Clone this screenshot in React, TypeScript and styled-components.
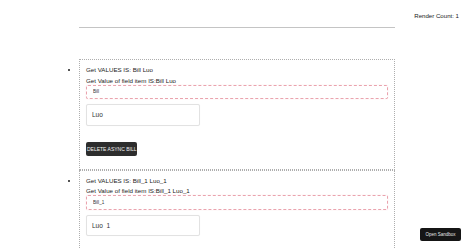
import React from 'react';
import styled, { createGlobalStyle } from 'styled-components';

const GlobalStyle = createGlobalStyle`
  body {
    margin: 0;
    font-family: "Liberation Sans", Arial, sans-serif;
    color: #1a1a1a;
    background: #fff;
  }
`;

const TopBar = styled.div`
  display: flex;
  justify-content: flex-end;
  height: 20px;
  padding: 11px 15px 0 0;
  box-sizing: border-box;
  font-size: 6.1px;
  line-height: 9px;
  color: #222;
`;

const Container = styled.div`
  width: 316px;
  margin: 0 auto;
`;

const Rule = styled.hr`
  margin: 7px 0 0;
  border: 0;
  border-top: 1px solid #c4c4c4;
`;

const List = styled.ul`
  margin: 31px 0 0;
  padding: 0;
`;

const Item = styled.li`
  list-style: disc outside;
  border: 1px dotted #aeaeae;
  padding: 5px 6px 13px 6px;
  font-size: 6.2px;
  line-height: 9px;
`;

const Line = styled.p<{ $gap?: number }>`
  margin: ${p => p.$gap ?? 0}px 0 0;
`;

const FirstInput = styled.input`
  display: block;
  width: 100%;
  height: 14.5px;
  box-sizing: border-box;
  margin: 0;
  padding: 0 6px;
  border: 1px dashed #eaa3ae;
  border-radius: 2px;
  box-shadow: 0 0 1px rgba(230, 120, 140, 0.35);
  font-family: inherit;
  font-size: 4.6px;
  color: #333;
  outline: none;
`;

const LastInput = styled.input`
  display: block;
  width: 114px;
  height: 21.5px;
  box-sizing: border-box;
  margin: 5px 0 0;
  padding: 0 5px;
  border: 1px solid #e2e2e2;
  border-radius: 2px;
  box-shadow: 0 0 1px rgba(0, 0, 0, 0.06);
  font-family: inherit;
  font-size: 6.5px;
  line-height: 10px;
  color: #333;
  outline: none;
`;

const DeleteButton = styled.button`
  display: block;
  margin: 16px 0 0;
  height: 14px;
  padding: 0 1px;
  border: 0;
  border-radius: 2px;
  background: #2d2d2d;
  color: #f2f2f2;
  font-family: inherit;
  font-size: 5px;
  text-transform: uppercase;
`;

const SandboxButton = styled.button`
  position: fixed;
  right: 13px;
  bottom: 7px;
  width: 41px;
  height: 13px;
  padding: 0;
  border: 0;
  border-radius: 2px;
  background: #151515;
  color: #e6e6e6;
  font-family: inherit;
  font-size: 4.5px;
`;

const items = [
  { first: 'Bill', last: 'Luo', showDelete: true },
  { first: 'Bill_1', last: 'Luo_1', showDelete: false },
];

export default function App() {
  return (
    <>
      <GlobalStyle />
      <TopBar>Render Count: 1</TopBar>
      <Container>
        <Rule />
        <List>
          {items.map((it, i) => (
            <Item key={i}>
              <Line>Get VALUES IS: {it.first} {it.last}</Line>
              <Line $gap={1.5}>Get Value of field item IS:{it.first} {it.last}</Line>
              <FirstInput defaultValue={it.first} />
              <LastInput defaultValue={it.last} />
              {it.showDelete && <DeleteButton>Delete Async Bill</DeleteButton>}
            </Item>
          ))}
        </List>
      </Container>
      <SandboxButton>Open Sandbox</SandboxButton>
    </>
  );
}
